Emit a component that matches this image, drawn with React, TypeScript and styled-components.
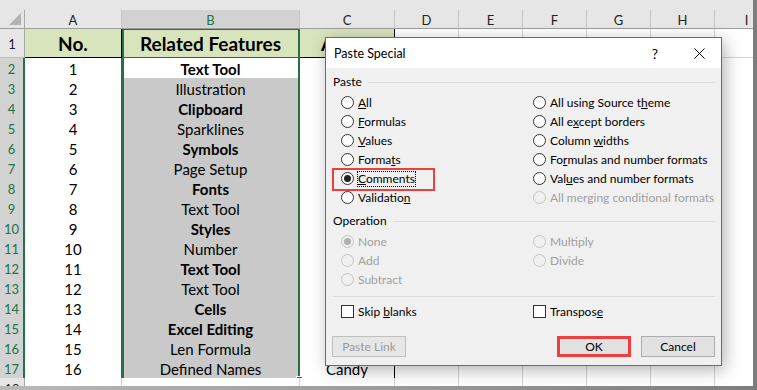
import React from 'react';
import styled, { createGlobalStyle } from 'styled-components';

const GlobalStyle = createGlobalStyle`
  html, body {
    margin: 0;
    padding: 0;
    background: #ffffff;
  }
  body {
    width: 757px;
    height: 390px;
    overflow: hidden;
  }
`;

const GREEN = '#217346';
const RED = '#ef3e3e';
const UI_FONT = "'Lato', 'Noto Sans', 'Liberation Sans', sans-serif";

const features: { name: string; bold: boolean }[] = [
  { name: 'Text Tool', bold: true },
  { name: 'Illustration', bold: false },
  { name: 'Clipboard', bold: true },
  { name: 'Sparklines', bold: false },
  { name: 'Symbols', bold: true },
  { name: 'Page Setup', bold: false },
  { name: 'Fonts', bold: true },
  { name: 'Text Tool', bold: false },
  { name: 'Styles', bold: true },
  { name: 'Number', bold: false },
  { name: 'Text Tool', bold: true },
  { name: 'Text Tool', bold: false },
  { name: 'Cells', bold: true },
  { name: 'Excel Editing', bold: true },
  { name: 'Len Formula', bold: false },
  { name: 'Defined Names', bold: false },
];

const emptyCols = ['D', 'E', 'F', 'G', 'H', 'I'];

const App: React.FC = () => {
  return (
    <>
      <GlobalStyle />
      <Frame>
        <Sheet>
          <TopBand />
          <GridRow $h={19}>
            <Corner>
              <CornerMark />
            </Corner>
            <ColHead>A</ColHead>
            <ColHead $active>B</ColHead>
            <ColHead>C</ColHead>
            {emptyCols.map((c) => (
              <ColHead key={c}>{c}</ColHead>
            ))}
          </GridRow>

          <GridRow $h={29}>
            <RowHead>1</RowHead>
            <Cell $bg="#d8e4bc" $bottom="#000" $right="#000" $size={19} $bold>No.</Cell>
            <Cell $bg="#d8e4bc" $bottom={GREEN} $right={GREEN} $size={19} $bold $sel="top">Related Features</Cell>
            <Cell $bg="#d8e4bc" $bottom="#000" $right="#000" $size={19} $bold $start>Ans</Cell>
            {emptyCols.map((c) => (
              <Cell key={c} />
            ))}
          </GridRow>

          {features.map((f, i) => {
            const last = i === features.length - 1;
            return (
              <GridRow $h={20} key={i}>
                <RowHead $active>{i + 2}</RowHead>
                <Cell $bottom="#000" $right={GREEN}>{i + 1}</Cell>
                <Cell
                  $bg={i === 0 ? '#ffffff' : '#c9c9c9'}
                  $bottom={last ? GREEN : '#000'}
                  $right={GREEN}
                  $bold={f.bold}
                  $sel={last ? 'bottom' : 'mid'}
                >
                  {f.name}
                  {last && <FillHandle />}
                </Cell>
                <Cell $bottom="#000" $right="#000">{last ? 'Candy' : ''}</Cell>
                {emptyCols.map((c) => (
                  <Cell key={c} />
                ))}
              </GridRow>
            );
          })}

          <GridRow $h={8}>
            <RowHead>18</RowHead>
            <Cell />
            <Cell />
            <Cell />
            {emptyCols.map((c) => (
              <Cell key={c} />
            ))}
          </GridRow>

          <PasteSpecial />
        </Sheet>
      </Frame>
    </>
  );
};

const PasteSpecial: React.FC = () => {
  return (
    <Dialog>
      <TitleBar>
        <Title>Paste Special</Title>
        <HelpMark>?</HelpMark>
        <CloseBox>
          <svg width="11" height="11" viewBox="0 0 11 11">
            <path d="M0.5 0.5 L10.5 10.5 M10.5 0.5 L0.5 10.5" stroke="#111" strokeWidth="1" fill="none" />
          </svg>
        </CloseBox>
      </TitleBar>

      <Body>
        <SectionHead>
          <span>Paste</span>
          <Rule />
        </SectionHead>
        <OptionGrid>
          <Option><Radio /><span><u>A</u>ll</span></Option>
          <Option><Radio /><span>All using Source t<u>h</u>eme</span></Option>
          <Option><Radio /><span><u>F</u>ormulas</span></Option>
          <Option><Radio /><span>All e<u>x</u>cept borders</span></Option>
          <Option><Radio /><span><u>V</u>alues</span></Option>
          <Option><Radio /><span>Column <u>w</u>idths</span></Option>
          <Option><Radio /><span>Forma<u>t</u>s</span></Option>
          <Option><Radio /><span>Fo<u>r</u>mulas and number formats</span></Option>
          <Option>
            <Highlight $w={103} $h={23} $left={-9} />
            <Radio $checked />
            <Focus><u>C</u>omments</Focus>
          </Option>
          <Option><Radio /><span>Val<u>u</u>es and number formats</span></Option>
          <Option><Radio /><span>Validatio<u>n</u></span></Option>
          <Option $disabled><Radio $disabled /><span>All merging conditional formats</span></Option>
        </OptionGrid>

        <SectionHead $gap={7}>
          <span>Operation</span>
          <Rule />
        </SectionHead>
        <OptionGrid>
          <Option $disabled><Radio $disabled $checked /><span>None</span></Option>
          <Option $disabled><Radio $disabled /><span>Multiply</span></Option>
          <Option $disabled><Radio $disabled /><span>Add</span></Option>
          <Option $disabled><Radio $disabled /><span>Divide</span></Option>
          <Option $disabled><Radio $disabled /><span>Subtract</span></Option>
        </OptionGrid>

        <Divider />

        <CheckGrid>
          <Option><CheckBox /><span>Skip <u>b</u>lanks</span></Option>
          <Option><CheckBox /><span>Transpos<u>e</u></span></Option>
        </CheckGrid>

        <ButtonRow>
          <Button disabled>Paste Link</Button>
          <ButtonGroup>
            <Button $marked>OK</Button>
            <Button>Cancel</Button>
          </ButtonGroup>
        </ButtonRow>
      </Body>
    </Dialog>
  );
};

export default App;


const Frame = styled.div`
  width: 757px;
  height: 390px;
  background: linear-gradient(90deg, #b9b9b9, #7d7d7d);
  overflow: hidden;
`;

const Sheet = styled.div`
  position: relative;
  width: 753px;
  height: 386px;
  background: #ffffff;
  overflow: hidden;
  font-family: 'Lato', 'Liberation Sans', sans-serif;
  color: #000;
`;

const TopBand = styled.div`
  height: 10px;
  background: #e6e6e6;
`;

const GridRow = styled.div<{ $h: number }>`
  display: grid;
  grid-template-columns: 25px 97px 178px 95px repeat(6, 64px);
  height: ${(p) => p.$h}px;
  overflow: hidden;
`;

const Corner = styled.div`
  box-sizing: border-box;
  background: #e6e6e6;
  border-right: 1px solid #a8a8a8;
  border-bottom: 1px solid #9e9e9e;
  display: flex;
  justify-content: flex-end;
  align-items: flex-end;
  padding: 0 3px 3px 0;
`;

const CornerMark = styled.div`
  width: 0;
  height: 0;
  border-left: 12px solid transparent;
  border-bottom: 12px solid #b3b3b3;
`;

const ColHead = styled.div<{ $active?: boolean }>`
  box-sizing: border-box;
  background: ${(p) => (p.$active ? '#d2d2d2' : '#e6e6e6')};
  color: ${(p) => (p.$active ? GREEN : '#222')};
  border-right: 1px solid #c6c6c6;
  border-bottom: 1px solid #9e9e9e;
  font-size: 13px;
  display: flex;
  align-items: center;
  justify-content: center;
  padding-top: 2px;
`;

const RowHead = styled.div<{ $active?: boolean }>`
  box-sizing: border-box;
  background: ${(p) => (p.$active ? '#d2d2d2' : '#e6e6e6')};
  color: ${(p) => (p.$active ? GREEN : '#222')};
  border-right: ${(p) => (p.$active ? `2px solid ${GREEN}` : '1px solid #a8a8a8')};
  border-bottom: 1px solid #bdbdbd;
  font-size: 13px;
  line-height: 20px;
  text-align: center;
  display: flex;
  align-items: center;
  justify-content: center;
  padding-top: 1px;
`;

const selShadow = {
  top: `inset 2px 0 0 ${GREEN}, inset -1px 0 0 ${GREEN}, inset 0 1px 0 ${GREEN}`,
  mid: `inset 2px 0 0 ${GREEN}, inset -1px 0 0 ${GREEN}`,
  bottom: `inset 2px 0 0 ${GREEN}, inset -1px 0 0 ${GREEN}, inset 0 -1px 0 ${GREEN}`,
};

const Cell = styled.div<{
  $bg?: string;
  $bottom?: string;
  $right?: string;
  $bold?: boolean;
  $size?: number;
  $start?: boolean;
  $sel?: 'top' | 'mid' | 'bottom';
}>`
  position: relative;
  box-sizing: border-box;
  background: ${(p) => p.$bg || '#ffffff'};
  border-right: 1px solid ${(p) => p.$right || '#d4d4d4'};
  border-bottom: 1px solid ${(p) => p.$bottom || '#d4d4d4'};
  box-shadow: ${(p) => (p.$sel ? selShadow[p.$sel] : 'none')};
  font-size: ${(p) => p.$size || 15}px;
  font-weight: ${(p) => (p.$bold ? 700 : 400)};
  display: flex;
  align-items: center;
  justify-content: ${(p) => (p.$start ? 'flex-start' : 'center')};
  padding-left: ${(p) => (p.$start ? 21 : 0)}px;
  white-space: nowrap;
  padding-top: 1px;
`;

const FillHandle = styled.div`
  position: absolute;
  right: -4px;
  bottom: -4px;
  width: 5px;
  height: 5px;
  background: ${GREEN};
  border: 1px solid #ffffff;
  z-index: 2;
`;

const Dialog = styled.div`
  position: absolute;
  left: 325px;
  top: 37px;
  width: 397px;
  height: 329px;
  box-sizing: border-box;
  border: 1px solid #1b7fd6;
  background: #f0f0f0;
  box-shadow: 3px 4px 16px rgba(0, 0, 0, 0.3);
  font-family: ${UI_FONT};
  font-size: 12px;
  color: #000;
  display: flex;
  flex-direction: column;
  z-index: 5;
`;

const TitleBar = styled.div`
  height: 30px;
  background: #ffffff;
  display: flex;
  align-items: center;
  padding-left: 8px;
`;

const Title = styled.div`
  flex: 1;
  font-size: 12.5px;
`;

const HelpMark = styled.div`
  width: 20px;
  text-align: center;
  font-size: 14px;
  margin-right: 19px;
`;

const CloseBox = styled.div`
  width: 30px;
  display: flex;
  justify-content: center;
  margin-right: 7px;
`;

const Body = styled.div`
  display: flex;
  flex-direction: column;
  padding: 7px 6px 0 7px;
`;

const SectionHead = styled.div<{ $gap?: number }>`
  display: flex;
  align-items: center;
  gap: 6px;
  height: 14px;
  line-height: 14px;
  margin-top: ${(p) => p.$gap || 0}px;
`;

const Rule = styled.div`
  flex: 1;
  height: 1px;
  background: #dcdcdc;
`;

const OptionGrid = styled.div`
  display: grid;
  grid-template-columns: 192px 1fr;
  grid-auto-rows: 19px;
  margin-top: 4px;
  padding-left: 8px;
`;

const CheckGrid = styled(OptionGrid)`
  margin-top: 5px;
`;

const Option = styled.div<{ $disabled?: boolean }>`
  position: relative;
  display: flex;
  align-items: center;
  gap: 4px;
  white-space: nowrap;
  color: ${(p) => (p.$disabled ? '#a0a0a0' : '#000')};
`;

const Radio = styled.span<{ $checked?: boolean; $disabled?: boolean }>`
  position: relative;
  width: 13px;
  height: 13px;
  box-sizing: border-box;
  border-radius: 50%;
  border: 1px solid ${(p) => (p.$disabled ? '#c4c4c4' : '#333')};
  background: ${(p) => (p.$disabled ? '#f0f0f0' : '#fff')};
  flex: none;
  &::after {
    content: '';
    display: ${(p) => (p.$checked ? 'block' : 'none')};
    position: absolute;
    left: 2px;
    top: 2px;
    width: 7px;
    height: 7px;
    border-radius: 50%;
    background: ${(p) => (p.$disabled ? '#b0b0b0' : '#222')};
  }
`;

const CheckBox = styled.span`
  width: 13px;
  height: 13px;
  box-sizing: border-box;
  border: 1px solid #333;
  background: #fff;
  flex: none;
`;

const Focus = styled.span`
  outline: 1px dotted #000;
  outline-offset: 0;
  line-height: 14px;
`;

const Highlight = styled.span<{ $w: number; $h: number; $left: number }>`
  position: absolute;
  left: ${(p) => p.$left}px;
  top: -1px;
  width: ${(p) => p.$w}px;
  height: ${(p) => p.$h}px;
  box-sizing: border-box;
  border: 2px solid ${RED};
  pointer-events: none;
`;

const Divider = styled.div`
  height: 1px;
  background: #dcdcdc;
  margin-top: 7px;
`;

const ButtonRow = styled.div`
  display: flex;
  justify-content: space-between;
  margin-top: 15px;
  margin-left: -1px;
`;

const ButtonGroup = styled.div`
  display: flex;
  gap: 10px;
`;

const Button = styled.button<{ $marked?: boolean }>`
  width: 74px;
  height: 21px;
  box-sizing: border-box;
  border: ${(p) => (p.$marked ? `3px solid ${RED}` : '1px solid #adadad')};
  background: #e1e1e1;
  font-family: ${UI_FONT};
  font-size: 12px;
  color: #000;
  padding: 0;
  display: flex;
  align-items: center;
  justify-content: center;
  &:disabled {
    color: #9a9a9a;
    border-color: #bfbfbf;
    background: #e6e6e6;
  }
`;
